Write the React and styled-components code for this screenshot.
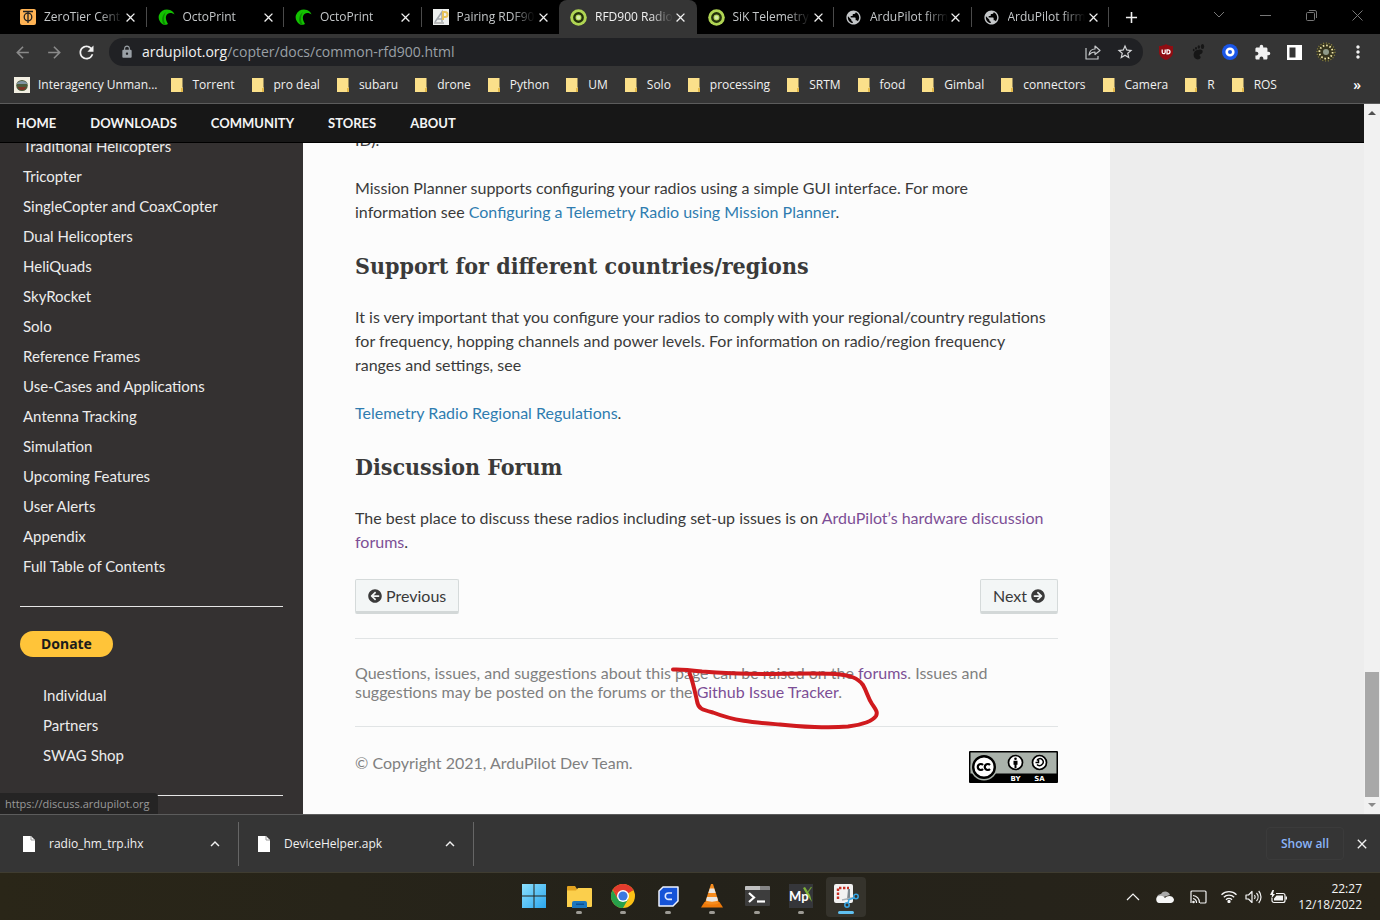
import React from 'react';
import styled, { createGlobalStyle } from 'styled-components';
import {
  MdAdd, MdArrowBack, MdArrowForward, MdClose, MdExpandLess,
  MdExtension, MdLock, MdMoreVert, MdPublic, MdRefresh, MdStarBorder
} from 'react-icons/md';
import { FaArrowCircleLeft, FaArrowCircleRight } from 'react-icons/fa';

const GlobalStyle = createGlobalStyle`
  * { box-sizing: border-box; }
  body { margin: 0; overflow: hidden; }
  button { font: inherit; color: inherit; background: none; border: none; padding: 0; cursor: pointer; }
  a { text-decoration: none; }
  svg { display: block; flex: none; }
`;

const Desktop = styled.div`
  display: flex;
  flex-direction: column;
  font-family: 'Open Sans', 'Noto Sans', sans-serif;
  font-size: 12px;
  height: 100vh;
`;

/* ---------- tab strip ---------- */

const TabStrip = styled.header`
  background: #000;
  color: #c4c7c9;
  display: flex;
  height: 34px;
  padding-left: 9px;
`;

const TabList = styled.div`
  display: flex;
  flex: 0 1 1100px;
  min-width: 0;
`;

const Tab = styled.div`
  align-items: center;
  background: ${props => props.$active ? '#353535' : 'transparent'};
  border-radius: 8px 8px 0 0;
  color: ${props => props.$active ? '#f1f1f1' : 'inherit'};
  display: flex;
  flex: 1 1 0;
  gap: 8px;
  min-width: 0;
  padding: 0 8px 0 11px;
  position: relative;
  ${props => props.$divider && `
    &::after {
      background: #4a4a4a;
      content: '';
      height: 20px;
      position: absolute;
      right: 0;
      top: 7px;
      width: 1px;
    }
  `}
`;

const TabTitle = styled.button`
  flex: 1;
  line-height: 20px;
  margin-right: -8px;
  mask-image: linear-gradient(90deg, #000 70%, transparent);
  min-width: 0;
  overflow: hidden;
  text-align: left;
  white-space: nowrap;
`;

const IconButton = styled.button`
  align-items: center;
  color: ${props => props.$color || '#f1f1f1'};
  display: flex;
  flex: none;
  justify-content: center;
  width: ${props => props.$width || 16}px;
`;

const WindowButtons = styled.div`
  display: flex;
  margin: 0 0 4px auto;
`;

/* ---------- toolbar ---------- */

const Toolbar = styled.div`
  align-items: center;
  background: #353535;
  color: #f1f1f1;
  display: flex;
  height: 36px;
  padding: 0 6px;
`;

const Omnibox = styled.div`
  align-items: center;
  background: #202124;
  border-radius: 14px;
  color: #9aa0a6;
  display: flex;
  flex: 1;
  font-size: 14px;
  gap: 8px;
  height: 28px;
  margin: 0 7px;
  padding: 0 6px 0 11px;
`;

const Address = styled.div`
  flex: 1;
  line-height: 20px;
  b { color: #f1f1f1; font-weight: 400; }
`;

const Bookmarks = styled.nav`
  align-items: center;
  background: #353535;
  border-bottom: 1px solid #5c5c5c;
  display: flex;
  gap: 17px;
  height: 34px;
  padding: 0 19px 4px 14px;
  white-space: nowrap;
`;

const Bookmark = styled.a`
  align-items: center;
  color: #f1f1f1;
  display: flex;
  gap: ${props => props.$wide ? 8 : 10}px;
  margin-right: ${props => props.$wide ? -4 : 0}px;
`;

const More = styled.button`
  color: #fff;
  font-size: 14px;
  font-weight: 600;
  margin-left: auto;
`;

/* ---------- web page ---------- */

const Viewport = styled.div`
  display: flex;
  flex: 1;
  min-height: 0;
  position: relative;
`;

const Page = styled.div`
  background: #ededed;
  display: flex;
  flex: 1;
  flex-direction: column;
  font-family: Lato, sans-serif;
  overflow: hidden;
`;

const SiteNav = styled.nav`
  align-items: center;
  background: #171717;
  border-bottom: 1px solid #000;
  display: flex;
  flex: none;
  gap: 34px;
  height: 39px;
  padding: 0 16px;
  a { color: #f4f4f4; font-size: 13px; font-weight: 700; line-height: 20px; }
`;

const Columns = styled.div`
  display: flex;
  flex: 1;
  min-height: 0;
  overflow: hidden;
`;

const Sidebar = styled.aside`
  background: #343131;
  flex: none;
  width: 303px;
`;

const MenuList = styled.ul`
  list-style: none;
  margin: ${props => props.$nested ? '23px 0 25px' : '-12px 0 25px'};
  padding: 0 0 0 ${props => props.$nested ? 43 : 23}px;
  a { color: #ececec; font-size: 15px; line-height: 30px; }
  li { height: 30px; }
`;

const Divider = styled.hr`
  border: none;
  border-top: 1px solid #e6e6e6;
  margin: 0 20px;
`;

const Donate = styled.button`
  background: #ffc439;
  border-radius: 13px;
  color: #1c1c1c;
  display: block;
  font-family: 'Noto Sans', sans-serif;
  font-size: 14px;
  font-weight: 700;
  height: 26px;
  line-height: 26px;
  margin: 24px 0 0 20px;
  width: 93px;
`;

const Article = styled.main`
  background: #fcfcfc;
  color: #3a3a3a;
  flex: 0 1 807px;
  font-size: 16px;
  line-height: 24px;
  padding: 0 52px;
  p { margin: 0 0 24px; max-width: 696px; }
  > p:first-child { margin-top: -15px; }
`;

const Heading = styled.h2`
  font-family: 'DejaVu Serif Condensed', 'DejaVu Serif', serif;
  font-size: 23px;
  font-weight: 700;
  line-height: 36px;
  margin: 0 0 21px;
`;

const Link = styled.a`
  color: ${props => props.$visited ? '#7c4f96' : '#2f7cb0'};
`;

const Pager = styled.div`
  display: flex;
  justify-content: space-between;
  padding-top: 1px;
`;

const PagerButton = styled.a`
  align-items: center;
  background: #f3f6f6;
  border: 1px solid #d5dada;
  border-bottom: 3px solid #d3d8d8;
  border-radius: 2px;
  color: #3a3a3a;
  display: flex;
  gap: 4px;
  height: 35px;
  padding: 0 12px;
`;

const Rule = styled.hr`
  border: none;
  border-top: 1px solid #e1e4e5;
  margin: 24px 0;
`;

const Note = styled.div`
  color: #808080;
  line-height: 19px;
  padding-bottom: 1px;
  position: relative;
  p { margin: 0; }
`;

const Scribble = styled.svg`
  left: 315px;
  pointer-events: none;
  position: absolute;
  top: 2px;
`;

const Copyright = styled.footer`
  color: #808080;
  display: flex;
  justify-content: space-between;
`;

const Scrollbar = styled.div`
  align-items: center;
  background: #f1f1f1;
  display: flex;
  flex-direction: column;
  width: 16px;
`;

const Thumb = styled.div`
  background: #a8a8a8;
  height: 125px;
  margin-top: auto;
  width: 14px;
`;

const StatusBubble = styled.div`
  background: #252424;
  border-radius: 0 4px 0 0;
  bottom: 0;
  color: #9a9a9a;
  font-size: 11px;
  left: 0;
  line-height: 21px;
  padding: 0 8px 0 5px;
  position: absolute;
`;

/* ---------- download shelf ---------- */

const Shelf = styled.section`
  align-items: center;
  background: #353535;
  border-top: 1px solid #5c5c5c;
  color: #f1f1f1;
  display: flex;
  height: 58px;
`;

const Download = styled.div`
  align-items: center;
  border-right: 1px solid #666;
  display: flex;
  gap: 14px;
  height: 44px;
  padding: 0 14px 0 ${props => props.$first ? 23 : 19}px;
  width: ${props => props.$first ? 239 : 235}px;
  span { flex: 1; }
`;

const ShowAll = styled.button`
  border: 1px solid #3b3b3b;
  border-radius: 4px;
  color: #8ab4f8;
  font-weight: 600;
  height: 33px;
  margin-left: auto;
  width: 78px;
`;

/* ---------- taskbar ---------- */

const Taskbar = styled.footer`
  align-items: center;
  background: linear-gradient(90deg, #2a2618, #24221a 50%, #28241a);
  border-top: 1px solid #3f3c30;
  color: #f4f4f4;
  display: grid;
  grid-template-columns: 1fr auto 1fr;
  height: 48px;
`;

const Apps = styled.div`
  display: grid;
  grid-column: 2;
  grid-template-columns: repeat(8, 1fr);
  justify-items: center;
  width: 356px;
`;

const AppButton = styled.button`
  align-items: center;
  background: ${props => props.$active ? '#35332c' : 'transparent'};
  border-radius: 4px;
  display: flex;
  flex-direction: column;
  height: 40px;
  padding-top: 7px;
  width: 40px;
  &::after {
    background: ${props => props.$active ? '#60c0f0' : '#9d9b95'};
    border-radius: 2px;
    content: '';
    display: ${props => props.$idle ? 'none' : 'block'};
    height: 3px;
    margin-top: 3px;
    width: ${props => props.$active ? 16 : 6}px;
  }
`;

const Tray = styled.div`
  align-items: center;
  display: flex;
  justify-content: flex-end;
  padding-right: 18px;
`;

const TrayGroup = styled.div`
  align-items: center;
  display: flex;
  gap: ${props => props.$gap}px;
  margin-right: ${props => props.$gap === 8 ? 11 : 14}px;
`;

const Clock = styled.time`
  line-height: 16px;
  text-align: right;
`;

/* ---------- drawings ---------- */

const ZeroTierIcon = () => (
  <svg width="16" height="16" viewBox="0 0 16 16">
    <rect width="16" height="16" rx="2" fill="#ffb354" />
    <g fill="none" stroke="#222" strokeWidth="1.3">
      <path d="M3 2.500h10M8 2.500V14" />
      <circle cx="8" cy="8" r="3.800" />
    </g>
  </svg>
);

const OctoIcon = () => (
  <svg width="17" height="16" viewBox="0 0 17 16">
    <path d="M5 15.500C1 13 0 9 1 6 3 1 8-.5 12 1c2 .8 4 2.500 4.500 4.500-2-1.500-5-2-7-.5C7 7 7.500 11 10 15c-2 1-3.500 1-5 .5z" fill="#13c100" />
    <path d="M5.500 15C3 11 4 6 8 3 5.500 7 5.500 12 7.500 15z" fill="#0a8a00" />
  </svg>
);

const PairingIcon = () => (
  <svg width="16" height="16" viewBox="0 0 16 16">
    <rect width="16" height="16" fill="#eef0ee" />
    <path d="M2 13L9 3v10M4 10h5" fill="none" stroke="#a3a8ad" strokeWidth="1.500" />
    <path d="M10 11V3h2a2.500 2.500 0 010 5h-2" fill="none" stroke="#e6c35a" strokeWidth="2" />
    <path d="M1 14h10" stroke="#888" />
  </svg>
);

const TargetIcon = () => (
  <svg width="17" height="17" viewBox="0 0 17 17">
    <circle cx="8.500" cy="8.500" r="8.300" fill="#b0d553" />
    <circle cx="8.500" cy="8.500" r="4.200" fill="#b0d553" stroke="#23300c" strokeWidth="2.400" />
    <circle cx="8.500" cy="8.500" r="2" fill="#d5ecaa" />
  </svg>
);

const GlobeIcon = () => <MdPublic size={17} color="#c4c7c9" />;

const SealIcon = () => (
  <svg width="16" height="16" viewBox="0 0 16 16">
    <rect width="16" height="16" fill="#f2efe2" />
    <ellipse cx="8" cy="8.500" rx="5.800" ry="5.500" fill="#4c5a3a" />
    <path d="M2.500 7C4 3 12 3 13.500 7z" fill="#7f93a0" />
    <path d="M3.500 10h9l-2.500 3H6z" fill="#7c3324" />
  </svg>
);

const FolderIcon = () => (
  <svg width="12" height="16" viewBox="0 0 12 16">
    <path d="M0 1h11.500v9l.5 1v4H0z" fill="#fbe08a" />
    <path d="M10 11h2v4h-2z" fill="#e3b94a" />
  </svg>
);

const ShareIcon = () => (
  <svg width="16" height="16" viewBox="0 0 16 16" fill="none" stroke="#c4c7c9" strokeWidth="1.200" strokeLinejoin="round">
    <path d="M1 4v11h12v-3" />
    <path d="M4 11c.5-4 2.500-6 6-6V2l5 4.500-5 4V8C7.500 8 5.500 9 4 11z" />
  </svg>
);

const ShieldIcon = () => (
  <svg width="16" height="16" viewBox="0 0 16 16">
    <path d="M8 0c2 1.500 4.500 2 7 2v6c0 4-3 6.500-7 8-4-1.500-7-4-7-8V2c2.500 0 5-.5 7-2z" fill="#8f0d12" />
    <path d="M4.200 5.500v2.700a1.500 1.500 0 003 0V5.500M9 5.800h1a2 2 0 010 4H9z" fill="none" stroke="#fff" strokeWidth="1.300" />
  </svg>
);

const FootIcon = () => (
  <svg width="14" height="16" viewBox="0 0 14 16" fill="#161616">
    <path d="M6 6c4-1.500 6.500 0 5.500 2.500C11 10 8.500 10 8.500 11.500c.5 1 1.500 1 1 2.500-1 2-5 2-6.500-1C2 10 3 7 6 6z" />
    <ellipse cx="11.500" cy="2.500" rx="1.700" ry="2.500" />
    <ellipse cx="7.800" cy="3" rx="1.200" ry="1.700" />
    <ellipse cx="5" cy="4.300" rx="1" ry="1.400" />
    <ellipse cx="2.700" cy="6" rx=".9" ry="1.200" />
  </svg>
);

const BlueDotIcon = () => (
  <svg width="16" height="16" viewBox="0 0 16 16">
    <circle cx="8" cy="8" r="8" fill="#1a56e8" />
    <circle cx="8" cy="8" r="3.300" fill="#1a56e8" stroke="#fff" strokeWidth="2.600" />
  </svg>
);

const PanelIcon = () => (
  <svg width="15" height="15" viewBox="0 0 15 15">
    <path d="M0 0h15v15H0z" fill="#fff" />
    <path d="M2.500 2.500h6v10h-6z" fill="#353535" />
  </svg>
);

const AvatarIcon = () => (
  <svg width="20" height="20" viewBox="0 0 20 20">
    <circle cx="10" cy="10" r="9" fill="#37351f" />
    <circle cx="10" cy="10" r="9" fill="none" stroke="#8d8540" strokeWidth="1.200" strokeDasharray="1 1.800" />
    <circle cx="10" cy="10" r="6.600" fill="none" stroke="#efe5a8" strokeWidth="1.800" strokeDasharray="1.600 1.850" />
    <circle cx="10" cy="10" r="3" fill="#8f9a8a" />
  </svg>
);

const FileIcon = () => (
  <svg width="12" height="16" viewBox="0 0 12 16">
    <path d="M0 0h8l4 4v12H0z" fill="#fff" />
    <path d="M8 0v4h4" fill="none" stroke="#999" />
  </svg>
);

const LicenceBadge = () => (
  <svg width="89" height="32" viewBox="0 0 89 32" role="img" aria-label="Creative Commons BY-SA">
    <rect width="89" height="32" rx="1" fill="#000" />
    <path d="M1.500 1.500h86v21h-86z" fill="#aab2ab" />
    <circle cx="15" cy="16" r="13.500" fill="#aab2ab" />
    <circle cx="15" cy="16" r="10.800" fill="#fff" stroke="#000" strokeWidth="2.400" />
    <path d="M14 14a3 3 0 100 4M21 14a3 3 0 100 4" fill="none" stroke="#000" strokeWidth="2.200" />
    <circle cx="46.500" cy="11.500" r="7" fill="#fff" stroke="#000" strokeWidth="1.700" />
    <circle cx="46.500" cy="7.800" r="1.300" />
    <path d="M44.500 9.700h4v4h-1v3.500h-2v-3.500h-1z" />
    <circle cx="70.500" cy="11.500" r="7" fill="#fff" stroke="#000" strokeWidth="1.700" />
    <path d="M68 9.500a3.300 3.300 0 115 4 3.300 3.300 0 01-5 0M66.500 11.500h3V9" fill="none" stroke="#000" strokeWidth="1.500" />
    <g fill="#fff" fontFamily="DejaVu Sans, sans-serif" fontSize="7" fontWeight="700" textAnchor="middle">
      <text x="46.500" y="30">BY</text>
      <text x="70.500" y="30">SA</text>
    </g>
  </svg>
);

const WindowsIcon = () => (
  <svg width="24" height="24" viewBox="0 0 24 24">
    <defs>
      <linearGradient id="win" x1="0" y1="0" x2="1" y2="1">
        <stop offset="0" stopColor="#8ce0fd" />
        <stop offset="1" stopColor="#2ba6ee" />
      </linearGradient>
    </defs>
    <path d="M0 0h11.500v11.500H0zM12.500 0H24v11.500H12.500zM0 12.500h11.500V24H0zM12.500 12.500H24V24H12.500z" fill="url(#win)" />
  </svg>
);

const ExplorerIcon = () => (
  <svg width="26" height="24" viewBox="0 0 26 24">
    <path d="M1 3a1 1 0 011-1h7l2 3v6H1z" fill="#e3a320" />
    <path d="M1 6.500h9L12 4h13a1 1 0 011 1v17a1 1 0 01-1 1H1z" fill="#fbcf4c" />
    <path d="M6 24v-5a2 2 0 012-2h11a2 2 0 012 2v5z" fill="#1b76bd" />
    <path d="M10 19.500h8V21h-8z" fill="#0c4f93" />
  </svg>
);

const ChromeIcon = () => (
  <svg width="24" height="24" viewBox="0 0 24 24">
    <circle cx="12" cy="12" r="12" fill="#fbc116" />
    <path d="M12 12L1.600 6A12 12 0 0122.400 6z" fill="#e33b2e" />
    <path d="M12 6h10.400L12 12zM1.600 6L6.800 15 12 12z" fill="#e33b2e" />
    <path d="M1.600 6A12 12 0 0012 24l5.200-9L12 12l-5.200 3z" fill="#27a04b" />
    <circle cx="12" cy="12" r="6" fill="#fff" />
    <circle cx="12" cy="12" r="4.600" fill="#3b78e0" />
  </svg>
);

const CuraIcon = () => (
  <svg width="22" height="24" viewBox="0 0 22 24">
    <path d="M6 3h15v14l-5 5H2V7z" fill="#1553d8" stroke="#eef3ff" strokeWidth="1.500" strokeLinejoin="round" />
    <path d="M15 9h-3.500a3.200 3.200 0 000 6.400H15" fill="none" stroke="#dfe9ff" strokeWidth="1.600" />
  </svg>
);

const ConeIcon = () => (
  <svg width="22" height="24" viewBox="0 0 22 24">
    <path d="M3.500 18h15L22 23.500H0z" fill="#ef7a0a" />
    <path d="M10 0h2l6 19c-2 2-12 2-14 0z" fill="#f58b1d" />
    <path d="M8.800 4.500h4.400l1.500 4.500H7.300zM6 13h10l1 3.500c-3 1.500-9 1.500-12 0z" fill="#e9e6e2" />
  </svg>
);

const TerminalIcon = () => (
  <svg width="26" height="24" viewBox="0 0 26 24">
    <rect x="1" y="2" width="25" height="20" rx="1" fill="#3d3d3d" />
    <path d="M1 6V3a1 1 0 011-1h14v4z" fill="#c0c0c0" />
    <path d="M16 2h9a1 1 0 011 1v3H16z" fill="#858585" />
    <path d="M5 9l5 4.500L5 18" fill="none" stroke="#fff" strokeWidth="2.200" />
    <path d="M13 17.500h8" stroke="#fff" strokeWidth="2.200" />
  </svg>
);

const PlannerIcon = () => (
  <svg width="24" height="24" viewBox="0 0 24 24">
    <rect width="24" height="24" fill="#35363a" />
    <path d="M14 4l2-1 5 8 2 7-5-7z" fill="#7fb23a" />
    <path d="M22.500 3L19 8" stroke="#6d9a35" strokeWidth="1.300" />
    <text x="0" y="17" fill="#fff" fontFamily="Lato, sans-serif" fontSize="13" fontWeight="700">Mp</text>
  </svg>
);

const SnipIcon = () => (
  <svg width="26" height="24" viewBox="0 0 26 24">
    <rect x="1" y="0" width="19" height="19" rx="2" fill="#f2f2f2" />
    <path d="M5 15V4h11" fill="none" stroke="#c62f24" strokeWidth="2.400" strokeDasharray="2.400 1.600" />
    <path d="M15 5h2v11h-3z" fill="#7f8990" />
    <path d="M9 16l12-2.500" stroke="#aab2b8" strokeWidth="1.500" />
    <circle cx="14" cy="21" r="2.200" fill="none" stroke="#35a5e5" strokeWidth="1.500" />
    <circle cx="23" cy="12.500" r="2.200" fill="none" stroke="#35a5e5" strokeWidth="1.500" />
    <path d="M15 19l1-3.500 5-1.500" fill="none" stroke="#35a5e5" strokeWidth="1.500" />
  </svg>
);

const CloudIcon = () => (
  <svg width="18" height="12" viewBox="0 0 18 12">
    <path d="M1 8C0 4 4 3 5 3c2-4 8-3 9 1z" fill="#a9a9a9" />
    <path d="M4 12a3.500 3.500 0 01-.5-7C6 4 8 6 9 7c2-3 8-3 9 1.500 0 2-1.500 3.500-3.500 3.500z" fill="#f6f6f6" />
  </svg>
);

const CastIcon = () => (
  <svg width="17" height="14" viewBox="0 0 17 14" fill="none" stroke="#f4f4f4" strokeWidth="1.200">
    <path d="M1 13V2a1 1 0 011-1h13a1 1 0 011 1v10a1 1 0 01-1 1h-5" />
    <path d="M3 5.500A7 7 0 019.500 13M3 8.500A4 4 0 016.500 13" />
    <circle cx="3.500" cy="12" r=".7" fill="#f4f4f4" />
  </svg>
);

const WifiIcon = () => (
  <svg width="16" height="13" viewBox="0 0 16 13" fill="none" stroke="#f4f4f4" strokeWidth="1.300">
    <path d="M.5 4.800a10.600 10.600 0 0115 0M2.800 7.300a7.300 7.300 0 0110.400 0M5 9.700a4.200 4.200 0 016 0" />
    <circle cx="8" cy="11.500" r="1" fill="#f4f4f4" />
  </svg>
);

const SpeakerIcon = () => (
  <svg width="17" height="14" viewBox="0 0 17 14" fill="none" stroke="#f4f4f4" strokeWidth="1.200" strokeLinejoin="round">
    <path d="M1 5h2.500L7 1.500v11L3.500 9H1zM9.500 5a3.500 3.500 0 010 4M11.500 3a6 6 0 010 8M13.700 1a9 9 0 010 12" />
  </svg>
);

const BatteryIcon = () => (
  <svg width="17" height="14" viewBox="0 0 17 14">
    <path d="M6 3.500h7a2 2 0 012 2v5a2 2 0 01-2 2H4a2 2 0 01-2-2V8" fill="none" stroke="#f4f4f4" strokeWidth="1.200" />
    <path d="M6.500 5.500H13v5H4V8.500zM15.500 6.500H17v3h-1.500zM2.500 0L0 5h2L1.500 8.500 5 4H3L4 0z" fill="#f4f4f4" />
  </svg>
);

const tabs = [
  { title: 'ZeroTier Cent', Icon: ZeroTierIcon, divider: true },
  { title: 'OctoPrint', Icon: OctoIcon, divider: true },
  { title: 'OctoPrint', Icon: OctoIcon, divider: true },
  { title: 'Pairing RDF90', Icon: PairingIcon },
  { title: 'RFD900 Radio', Icon: TargetIcon, active: true },
  { title: 'SiK Telemetry', Icon: TargetIcon, divider: true },
  { title: 'ArduPilot firm', Icon: GlobeIcon, divider: true },
  { title: 'ArduPilot firm', Icon: GlobeIcon, divider: true }
];

const bookmarks = [
  'Torrent', 'pro deal', 'subaru', 'drone', 'Python', 'UM', 'Solo', 'processing',
  'SRTM', 'food', 'Gimbal', 'connectors', 'Camera', 'R', 'ROS'
];

const siteLinks = ['HOME', 'DOWNLOADS', 'COMMUNITY', 'STORES', 'ABOUT'];

const menu = [
  'Traditional Helicopters', 'Tricopter', 'SingleCopter and CoaxCopter', 'Dual Helicopters',
  'HeliQuads', 'SkyRocket', 'Solo', 'Reference Frames', 'Use-Cases and Applications',
  'Antenna Tracking', 'Simulation', 'Upcoming Features', 'User Alerts', 'Appendix',
  'Full Table of Contents'
];

const shopMenu = ['Individual', 'Partners', 'SWAG Shop'];

const downloads = ['radio_hm_trp.ihx', 'DeviceHelper.apk'];

const apps = [
  { name: 'Start', Icon: WindowsIcon, idle: true },
  { name: 'File Explorer', Icon: ExplorerIcon },
  { name: 'Google Chrome', Icon: ChromeIcon },
  { name: 'Cura', Icon: CuraIcon },
  { name: 'VLC', Icon: ConeIcon },
  { name: 'Terminal', Icon: TerminalIcon },
  { name: 'Mission Planner', Icon: PlannerIcon },
  { name: 'Snipping Tool', Icon: SnipIcon, active: true }
];

const BrowserTop = () => (
  <>
    <TabStrip>
      <TabList>
        {tabs.map(({ title, Icon, active, divider }, i) => (
          <Tab key={i} $active={active} $divider={divider}>
            <Icon />
            <TabTitle>{title}</TabTitle>
            <IconButton aria-label="Close tab"><MdClose size={15} /></IconButton>
          </Tab>
        ))}
      </TabList>
      <IconButton $width={44} aria-label="New tab"><MdAdd size={19} /></IconButton>
      <WindowButtons>
        <IconButton $width={46} $color="#777" aria-label="Search tabs">
          <svg width="12" height="8" viewBox="0 0 12 8"><path d="M1 1l5 5 5-5" fill="none" stroke="currentColor" /></svg>
        </IconButton>
        <IconButton $width={46} $color="#777" aria-label="Minimize">
          <svg width="11" height="11" viewBox="0 0 11 11"><path d="M0 5.500h11" stroke="currentColor" /></svg>
        </IconButton>
        <IconButton $width={46} $color="#777" aria-label="Restore">
          <svg width="11" height="11" viewBox="0 0 11 11" fill="none" stroke="currentColor">
            <rect x=".5" y="2.500" width="8" height="8" rx="1" />
            <path d="M3 .5h6a1.500 1.500 0 011.500 1.500v6" />
          </svg>
        </IconButton>
        <IconButton $width={46} $color="#777" aria-label="Close">
          <svg width="11" height="11" viewBox="0 0 11 11"><path d="M.5.5l10 10M10.500.5l-10 10" stroke="currentColor" /></svg>
        </IconButton>
      </WindowButtons>
    </TabStrip>
    <Toolbar>
      <IconButton $width={32} $color="#8a8a8a" aria-label="Back"><MdArrowBack size={19} /></IconButton>
      <IconButton $width={32} $color="#8a8a8a" aria-label="Forward"><MdArrowForward size={19} /></IconButton>
      <IconButton $width={32} aria-label="Reload"><MdRefresh size={21} /></IconButton>
      <Omnibox>
        <MdLock size={14} />
        <Address><b>ardupilot.org</b>/copter/docs/common-rfd900.html</Address>
        <IconButton $width={24} aria-label="Share"><ShareIcon /></IconButton>
        <IconButton $width={24} $color="#d5d7d9" aria-label="Bookmark"><MdStarBorder size={18} /></IconButton>
      </Omnibox>
      <IconButton $width={32} aria-label="uBlock Origin"><ShieldIcon /></IconButton>
      <IconButton $width={32} aria-label="GNOME"><FootIcon /></IconButton>
      <IconButton $width={32} aria-label="Extension"><BlueDotIcon /></IconButton>
      <IconButton $width={32} aria-label="Extensions"><MdExtension size={17} /></IconButton>
      <IconButton $width={32} aria-label="Side panel"><PanelIcon /></IconButton>
      <IconButton $width={32} aria-label="Profile"><AvatarIcon /></IconButton>
      <IconButton $width={32} aria-label="Menu"><MdMoreVert size={20} /></IconButton>
    </Toolbar>
    <Bookmarks>
      <Bookmark href="#" $wide><SealIcon />Interagency Unman...</Bookmark>
      {bookmarks.map(name => (
        <Bookmark href="#" key={name}><FolderIcon />{name}</Bookmark>
      ))}
      <More aria-label="More bookmarks">»</More>
    </Bookmarks>
  </>
);

const SidebarContent = () => (
  <Sidebar>
    <MenuList>
      {menu.map(item => <li key={item}><a href="#">{item}</a></li>)}
    </MenuList>
    <Divider />
    <Donate>Donate</Donate>
    <MenuList $nested>
      {shopMenu.map(item => <li key={item}><a href="#">{item}</a></li>)}
    </MenuList>
    <Divider />
  </Sidebar>
);

const ArticleContent = () => (
  <Article>
    <p>ID).</p>
    <p>
      Mission Planner supports configuring your radios using a simple GUI interface. For more
      information see <Link href="#">Configuring a Telemetry Radio using Mission Planner</Link>.
    </p>
    <Heading>Support for different countries/regions</Heading>
    <p>
      It is very important that you configure your radios to comply with your regional/country regulations
      for frequency, hopping channels and power levels. For information on radio/region frequency
      ranges and settings, see
    </p>
    <p><Link href="#">Telemetry Radio Regional Regulations</Link>.</p>
    <Heading>Discussion Forum</Heading>
    <p>
      The best place to discuss these radios including set-up issues is on{' '}
      <Link href="#" $visited>ArduPilot’s hardware discussion forums</Link>.
    </p>
    <Pager>
      <PagerButton href="#"><FaArrowCircleLeft size={14} />Previous</PagerButton>
      <PagerButton href="#">Next<FaArrowCircleRight size={14} /></PagerButton>
    </Pager>
    <Rule />
    <Note>
      <p>
        Questions, issues, and suggestions about this page can be raised on the{' '}
        <Link href="#" $visited>forums</Link>. Issues and suggestions may be posted on the forums or the{' '}
        <Link href="#" $visited>Github Issue Tracker</Link>.
      </p>
      <Scribble width="212" height="68" viewBox="0 0 212 68" fill="none" stroke="#d01a1e" strokeLinecap="round" strokeLinejoin="round">
        <path strokeWidth="4" d="M3 4.500C12 4 20 5 32 6.500 60 9 75 9 95 9c20 0 45-1 70 0 15 1 23 4 28 11 4 7 5 13 9 19 4 6 6 8 4 12-4 6-17 9-28 10.500-18 1.500-48 .5-68-2-25-2-44-3-67-12C33 45 28 44 27 36 25 27 23 17 19.500 8" />
      </Scribble>
    </Note>
    <Rule />
    <Copyright>
      © Copyright 2021, ArduPilot Dev Team.
      <a href="#"><LicenceBadge /></a>
    </Copyright>
  </Article>
);

export default function App() {
  return (
    <Desktop>
      <GlobalStyle />
      <BrowserTop />
      <Viewport>
        <Page>
          <SiteNav>
            {siteLinks.map(link => <a href="#" key={link}>{link}</a>)}
          </SiteNav>
          <Columns>
            <SidebarContent />
            <ArticleContent />
          </Columns>
        </Page>
        <Scrollbar>
          <svg width="16" height="17" viewBox="0 0 16 17"><path d="M4 11l4-4 4 4z" fill="#505050" /></svg>
          <Thumb />
          <svg width="16" height="17" viewBox="0 0 16 17"><path d="M4 6l4 4 4-4z" fill="#8a8a8a" /></svg>
        </Scrollbar>
        <StatusBubble>https://discuss.ardupilot.org</StatusBubble>
      </Viewport>
      <Shelf>
        {downloads.map((name, i) => (
          <Download key={name} $first={i === 0}>
            <FileIcon />
            <span>{name}</span>
            <IconButton $width={18} aria-label="Options"><MdExpandLess size={18} /></IconButton>
          </Download>
        ))}
        <ShowAll>Show all</ShowAll>
        <IconButton $width={36} aria-label="Close shelf"><MdClose size={16} /></IconButton>
      </Shelf>
      <Taskbar>
        <Apps>
          {apps.map(({ name, Icon, active, idle }) => (
            <AppButton key={name} aria-label={name} $active={active} $idle={idle}><Icon /></AppButton>
          ))}
        </Apps>
        <Tray>
          <TrayGroup $gap={16}>
            <svg width="14" height="8" viewBox="0 0 14 8"><path d="M1 7l6-6 6 6" fill="none" stroke="#f4f4f4" strokeWidth="1.200" /></svg>
            <CloudIcon />
            <CastIcon />
          </TrayGroup>
          <TrayGroup $gap={8}>
            <WifiIcon />
            <SpeakerIcon />
            <BatteryIcon />
          </TrayGroup>
          <Clock>22:27<br />12/18/2022</Clock>
        </Tray>
      </Taskbar>
    </Desktop>
  );
}
